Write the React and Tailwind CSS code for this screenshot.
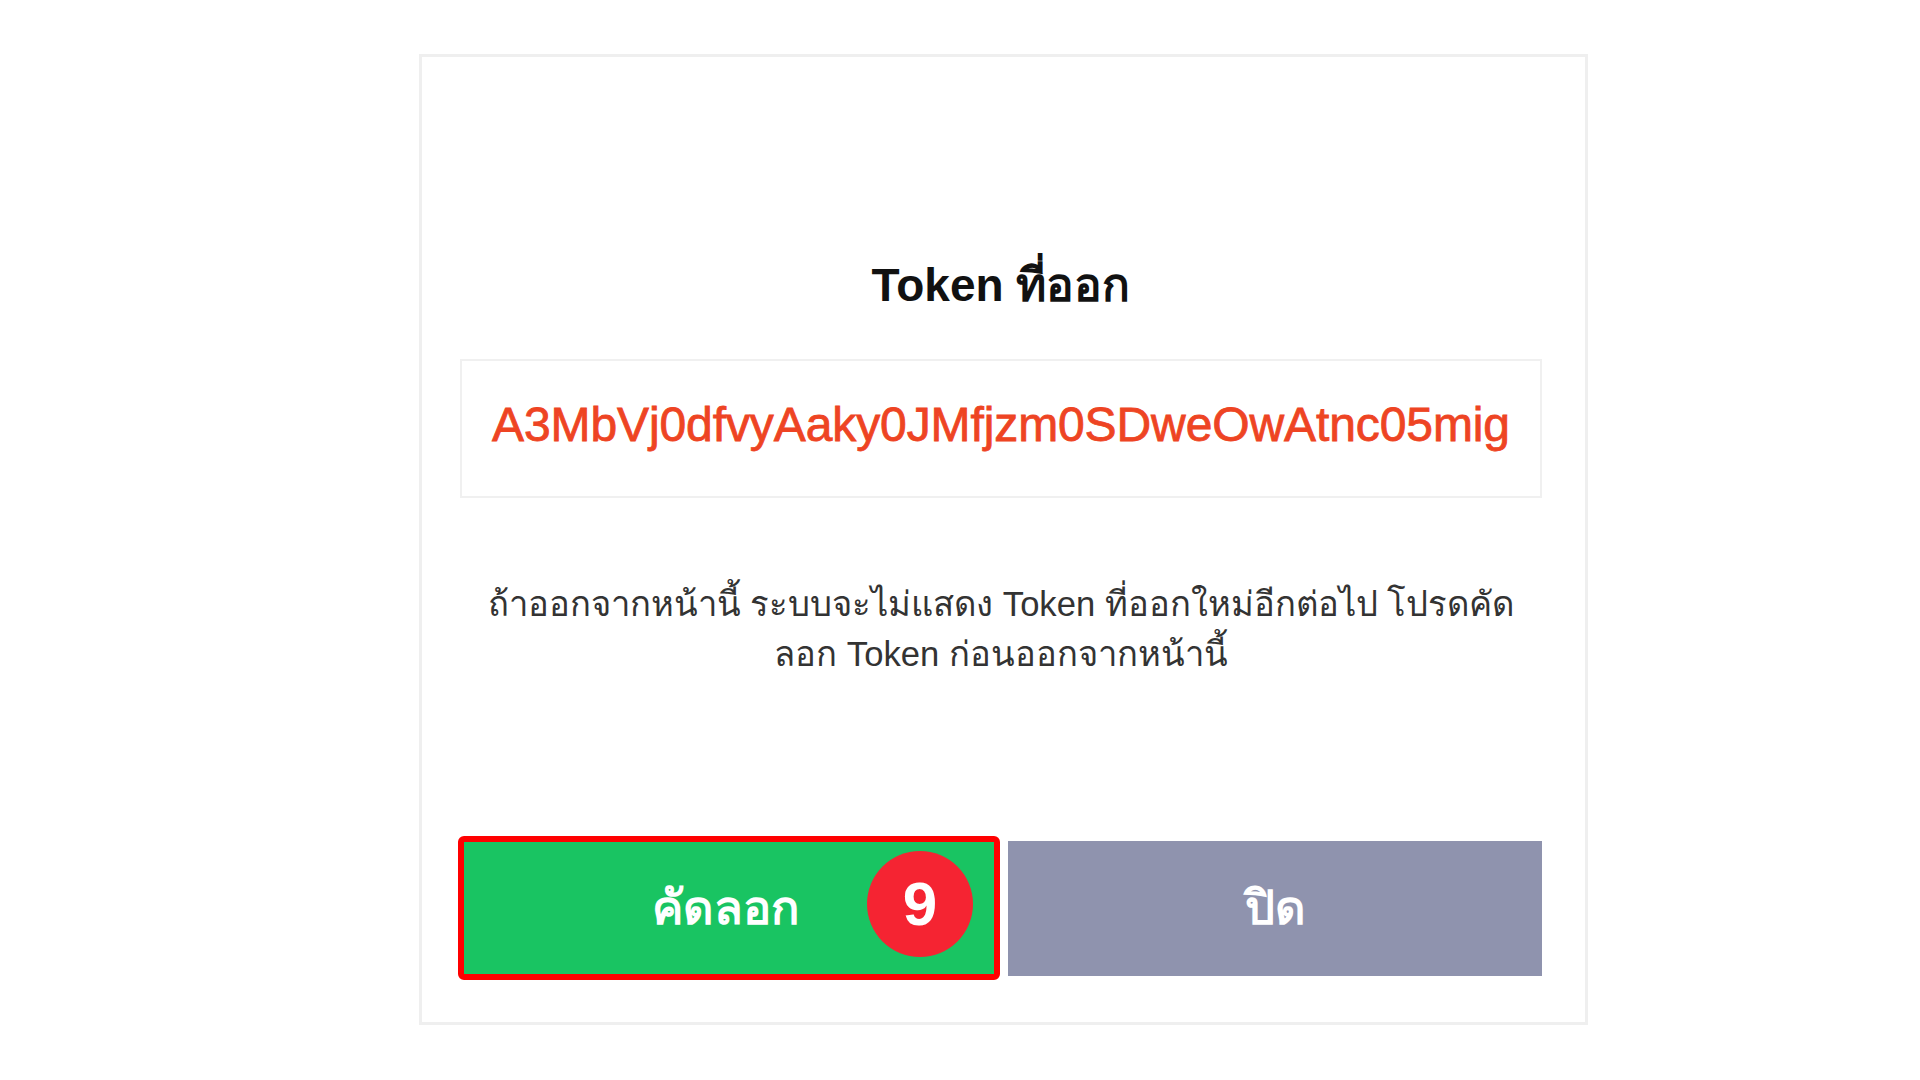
import React from 'react'

const font = { fontFamily: '"Liberation Sans", "Noto Sans", sans-serif' }

export default function App() {
  return (
    <div className="min-h-screen w-full bg-white" style={font}>
      <div className="pt-[54px] pl-[419px]">
        <div className="w-[1169px] h-[971px] border-[3px] border-[#efefef] bg-white flex flex-col pl-[38px] pr-[43px]">
          <h1 className="mt-[201px] text-center text-[46px] leading-[54px] font-bold text-[#111]">
            Token ที่ออก
          </h1>

          <div className="mt-[47px] h-[139px] border-2 border-[#f0f0f0] flex items-center justify-center pb-[7px]">
            <span className="text-[48px] leading-none text-[#ee4423] tracking-[-0.1px] [-webkit-text-stroke:0.8px_#ee4423]">
              A3MbVj0dfvyAaky0JMfjzm0SDweOwAtnc05mig
            </span>
          </div>

          <p className="mt-[81px] text-center text-[34.6px] leading-[50px] text-[#333] whitespace-nowrap">
            ถ้าออกจากหน้านี้ ระบบจะไม่แสดง Token ที่ออกใหม่อีกต่อไป โปรดคัด
            <br />
            ลอก Token ก่อนออกจากหน้านี้
          </p>

          <div className="mt-[157px] -ml-[2px] flex items-center gap-[8px]">
            <div className="relative w-[542px] h-[144px] border-[6px] border-[#ff0000] rounded-[6px] bg-[#19c462] flex items-center justify-center">
              <span className="text-white font-bold text-[47px] leading-none pr-[8px] pb-[2px]">คัดลอก</span>
              <div className="absolute left-[403px] top-[9px] w-[106px] h-[106px] rounded-full bg-[#f52432] flex items-center justify-center">
                <span className="text-white font-bold text-[62px] leading-none">9</span>
              </div>
            </div>
            <div className="flex-1 h-[135px] bg-[#8f93ae] flex items-center justify-center">
              <span className="text-white font-bold text-[47px] leading-none pb-[2px]">ปิด</span>
            </div>
          </div>
        </div>
      </div>
    </div>
  )
}
